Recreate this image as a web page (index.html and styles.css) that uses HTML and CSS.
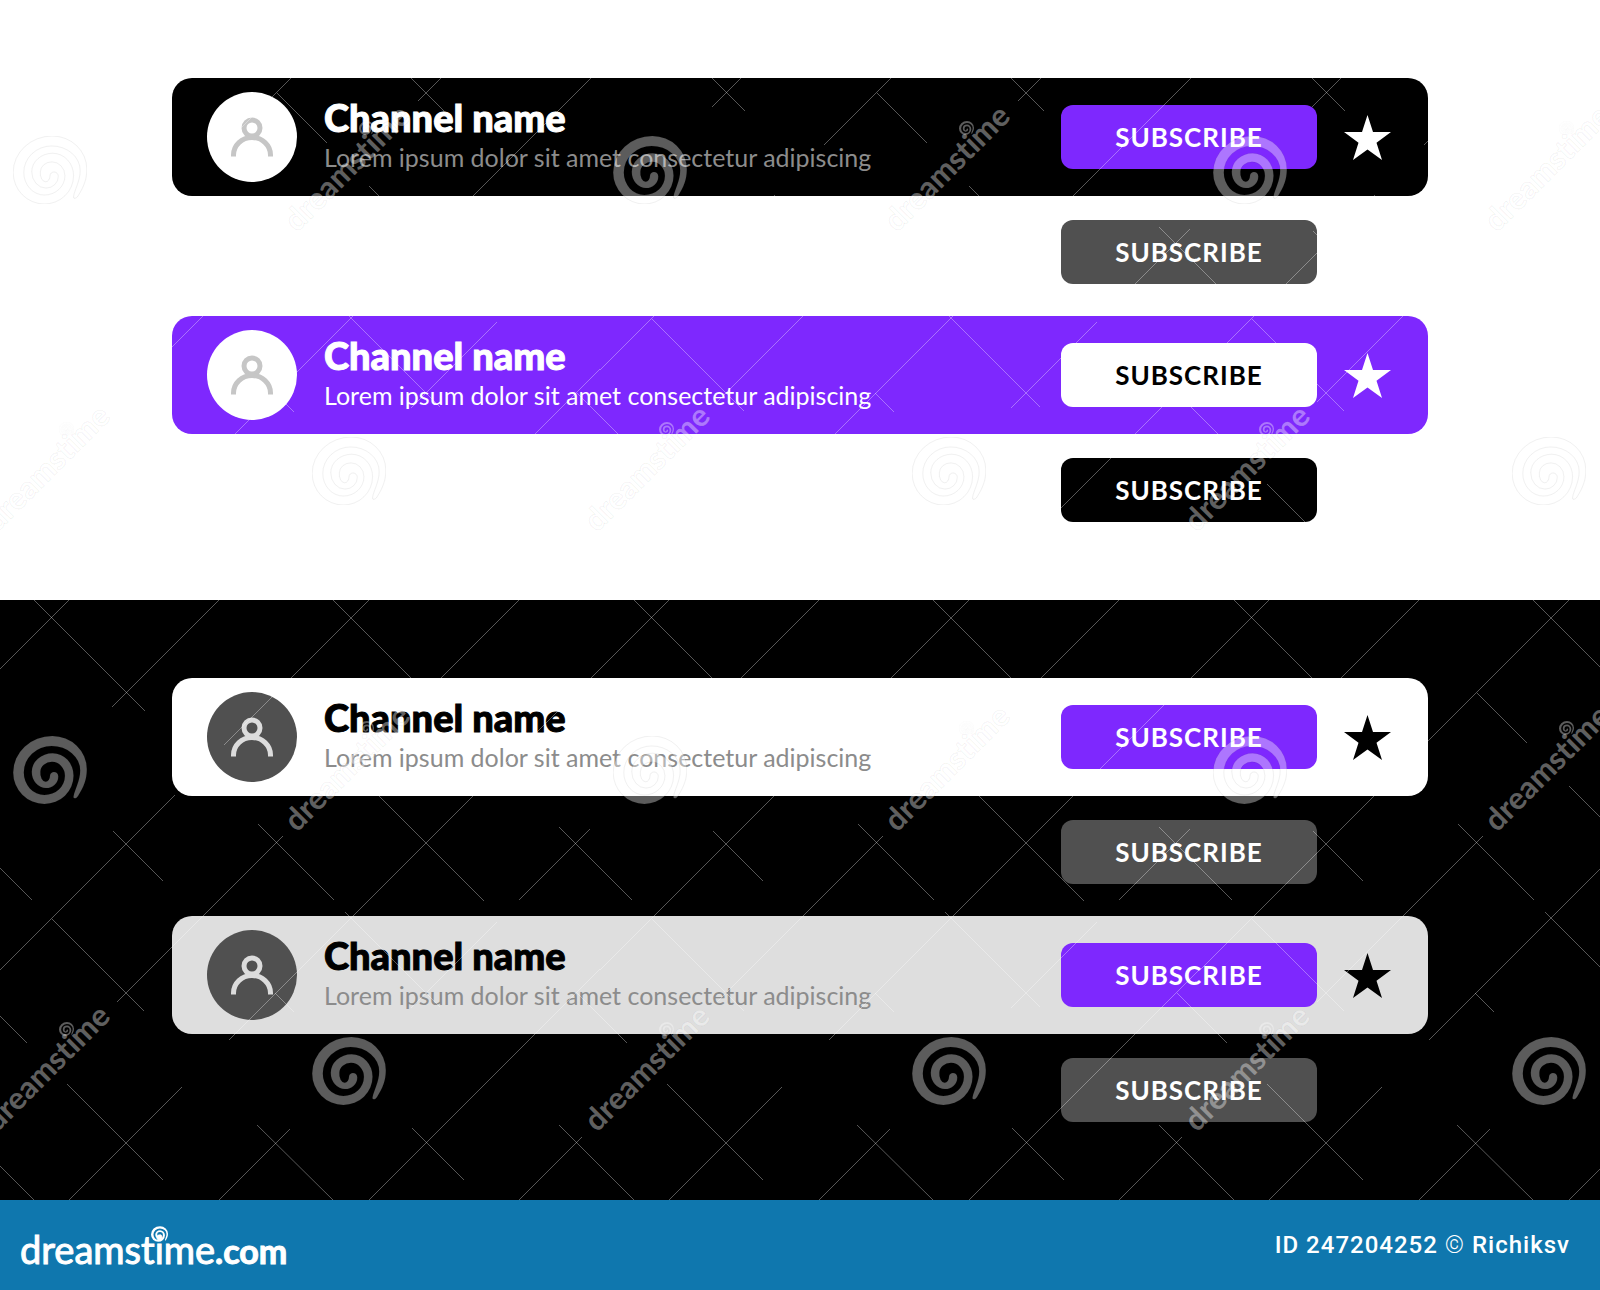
FILE: index.html
```html
<!DOCTYPE html>
<html lang="en">
<head>
    <meta charset="UTF-8">
    <meta name="viewport" content="width=device-width, initial-scale=1.0">
    <title>Channel name</title>

    <link rel="stylesheet" href="styles.css">
</head>
<body>
    <!-- shared shapes -->
    <svg class="shapes" width="0" height="0" aria-hidden="true">
        <symbol id="person" viewBox="0 0 42 40">
            <circle cx="21" cy="11" r="8" />
            <path d="M2.500 39.500V38a18.500 17.500 0 0 1 37 0v1.500" />
        </symbol>
        <symbol id="star" viewBox="0 0 47 45">
            <path d="M23.500 0L29 17H47L32.500 27.800L38 45L23.500 34.600L9 45L14.500 27.800L0 17H18z" />
        </symbol>
        <symbol id="spiral" viewBox="0 0 222 205">
            <path d="M182 182C180 192 192 188 196 180C212 154 222 132 222 100A104 100 0 0 0 118 0A118 110 0 0 0 0 110A94 95 0 0 0 94 205A88 85 0 0 0 182 120A63 67 0 0 0 119 52A63 56 0 0 0 56 108A43 49 0 0 0 99 157A37 35 0 0 0 136 122C136 105 112 104 111 120A13 18 0 0 1 98 138A16 26 0 0 1 82 108A35 30 0 0 1 117 78A39 42 0 0 1 156 120A62 58 0 0 1 94 178A62 68 0 0 1 32 110A84 80 0 0 1 116 30A86 74 0 0 1 202 104C202 135 186 160 182 182z" />
        </symbol>
    </svg>

    <main class="page">
        <section class="panel light">
            <div class="group">
                <article class="card black">
                    <div class="avatar"><svg width="42" height="40"><use href="#person" /></svg></div>
                    <div class="info">
                        <h2>Channel name</h2>
                        <p>Lorem ipsum dolor sit amet consectetur adipiscing</p>
                    </div>
                    <button class="subscribe purple-btn">SUBSCRIBE</button>
                    <button class="star" aria-label="Favourite"><svg width="47" height="45"><use href="#star" /></svg></button>
                </article>
                <button class="subscribe gray-btn below">SUBSCRIBE</button>
            </div>
            <div class="group">
                <article class="card purple">
                    <div class="avatar"><svg width="42" height="40"><use href="#person" /></svg></div>
                    <div class="info">
                        <h2>Channel name</h2>
                        <p>Lorem ipsum dolor sit amet consectetur adipiscing</p>
                    </div>
                    <button class="subscribe white-btn">SUBSCRIBE</button>
                    <button class="star" aria-label="Favourite"><svg width="47" height="45"><use href="#star" /></svg></button>
                </article>
                <button class="subscribe black-btn below">SUBSCRIBE</button>
            </div>
        </section>

        <section class="panel dark">
            <div class="group">
                <article class="card white">
                    <div class="avatar"><svg width="42" height="40"><use href="#person" /></svg></div>
                    <div class="info">
                        <h2>Channel name</h2>
                        <p>Lorem ipsum dolor sit amet consectetur adipiscing</p>
                    </div>
                    <button class="subscribe purple-btn">SUBSCRIBE</button>
                    <button class="star" aria-label="Favourite"><svg width="47" height="45"><use href="#star" /></svg></button>
                </article>
                <button class="subscribe gray-btn below">SUBSCRIBE</button>
            </div>
            <div class="group">
                <article class="card gray">
                    <div class="avatar"><svg width="42" height="40"><use href="#person" /></svg></div>
                    <div class="info">
                        <h2>Channel name</h2>
                        <p>Lorem ipsum dolor sit amet consectetur adipiscing</p>
                    </div>
                    <button class="subscribe purple-btn">SUBSCRIBE</button>
                    <button class="star" aria-label="Favourite"><svg width="47" height="45"><use href="#star" /></svg></button>
                </article>
                <button class="subscribe gray-btn below">SUBSCRIBE</button>
            </div>
        </section>

        <!-- watermark, lines and spirals are one 600px tile repeated over both panels -->
        <svg class="watermark" aria-hidden="true">
            <defs>
                <pattern id="tile" width="600" height="600" patternUnits="userSpaceOnUse">
                    <path class="lines" d="M69 0L0 69M219 0L112 107M369 0L224 145M175 195L0 370M519 0L418 101M283 236L117 402M600 69L229 440M182 487L69 600M590 229L519 300M497 322L411 408M290 529L219 600M600 369L369 600M582 537L519 600" />
                    <path class="lines" d="M34 0L145 111M333 0L444 111M277 93L327 143M369 186L484 301M113 231L163 281M559 227L600 268M0 268L32 300M258 224L334 300M345 312L440 407M577 393L600 416M0 416L27 443M52 319L144 411M275 393L294 412M67 484L163 580M257 525L333 600M412 528L464 580M559 525L600 566M0 566L34 600" />
                    <g class="spirals">
                        <use href="#spiral" x="13" y="136" width="74" height="68" />
                        <use href="#spiral" x="312" y="437" width="74" height="68" />
                        <use href="#spiral" x="359" y="121" width="15" height="14" />
                        <use href="#spiral" x="59" y="422" width="15" height="14" />
                    </g>
                </pattern>
            </defs>
            <rect width="100%" height="100%" fill="url(#tile)" />
            <g class="words">
                <text transform="translate(297 233) rotate(-45)">dreamstime</text>
                <text transform="translate(897 233) rotate(-45)">dreamstime</text>
                <text transform="translate(1497 233) rotate(-45)">dreamstime</text>
                <text transform="translate(-3 533) rotate(-45)">dreamstime</text>
                <text transform="translate(597 533) rotate(-45)">dreamstime</text>
                <text transform="translate(1197 533) rotate(-45)">dreamstime</text>
                <text transform="translate(297 833) rotate(-45)">dreamstime</text>
                <text transform="translate(897 833) rotate(-45)">dreamstime</text>
                <text transform="translate(1497 833) rotate(-45)">dreamstime</text>
                <text transform="translate(-3 1133) rotate(-45)">dreamstime</text>
                <text transform="translate(597 1133) rotate(-45)">dreamstime</text>
                <text transform="translate(1197 1133) rotate(-45)">dreamstime</text>
            </g>
        </svg>
    </main>

    <footer class="footer">
        <div class="logo">
            dreamst<span class="swirl">i<svg width="17" height="16"><use href="#spiral" /></svg></span>me<b>.com</b>
        </div>
        <p class="credit">ID 247204252 <span>©</span> Richiksv</p>
    </footer>
</body>
</html>
```
FILE: styles.css
```css
*{
    margin: 0;
    padding: 0;
    box-sizing: border-box;
}
body 
{
    font-family: Lato, "Open Sans", sans-serif;
    background-color: white;
}
.shapes 
{
    position: absolute;
}
.page 
{
    position: relative;
}
.panel 
{
    display: flex;
    flex-direction: column;
    gap: 32px;
    padding: 78px 20px;
}
.light 
{
    background-color: white;
}
.dark 
{
    background-color: black;
}
.group 
{
    display: flex;
    flex-direction: column;
    gap: 24px;
    width: 100%;
    max-width: 1256px;
    margin: 0 auto;
}
.card 
{
    display: flex;
    align-items: center;
    gap: 27px;
    padding: 14px 37px 14px 35px;
    border-radius: 20px;
}
.avatar 
{
    display: flex;
    align-items: center;
    justify-content: center;
    flex-shrink: 0;
    width: 90px;
    height: 90px;
    border-radius: 50%;
    background-color: white;
    color: #c6c6c6;
}
.avatar svg 
{
    fill: none;
    stroke: currentColor;
    stroke-width: 5px;
}
.info 
{
    flex: 1;
    padding-bottom: 4px;
}
.info h2 
{
    font-size: 38px;
    font-weight: 900;
    line-height: 44px;
    -webkit-text-stroke: 1px currentColor;
}
.info p 
{
    font-size: 25px;
    line-height: 36px;
    color: #8c8c8c;
}
.subscribe 
{
    width: 256px;
    height: 64px;
    border: 0;
    border-radius: 12px;
    font-family: inherit;
    font-size: 26px;
    font-weight: 700;
    letter-spacing: 1px;
    color: white;
    cursor: pointer;
}
.below 
{
    align-self: flex-end;
    margin-right: 111px;
}
.star 
{
    display: flex;
    border: 0;
    background: none;
    color: inherit;
    cursor: pointer;
}
.star svg 
{
    fill: currentColor;
}

/* card colours */
.black 
{
    background-color: black;
    color: white;
}
.purple 
{
    background-color: #7e28fe;
    color: white;
}
.purple .info p 
{
    color: white;
}
.white 
{
    background-color: white;
    color: black;
}
.gray 
{
    background-color: #dedede;
    color: black;
}
.dark .avatar 
{
    background-color: #505050;
    color: #dcdcdc;
}

/* button colours */
.purple-btn 
{
    background-color: #7e28fe;
}
.gray-btn 
{
    background-color: #505050;
}
.white-btn 
{
    background-color: white;
    color: black;
}
.black-btn 
{
    background-color: black;
}

.watermark 
{
    position: absolute;
    top: 0;
    left: 0;
    width: 100%;
    height: 100%;
    pointer-events: none;
}
.lines 
{
    fill: none;
    stroke: white;
    stroke-opacity: 0.34;
}
.spirals 
{
    fill: white;
    fill-opacity: 0.36;
    stroke: black;
    stroke-opacity: 0.06;
    stroke-width: 3px;
}
.words 
{
    font-size: 31px;
    font-weight: 700;
    font-variant-ligatures: none;
    fill: white;
    fill-opacity: 0.4;
    stroke: black;
    stroke-opacity: 0.06;
}

.footer 
{
    display: flex;
    align-items: center;
    justify-content: space-between;
    min-height: 90px;
    padding: 0 30px 0 20px;
    background-color: #0f77ae;
    color: white;
}
.logo 
{
    padding-top: 10px;
    font-size: 38px;
    font-weight: 400;
    font-variant-ligatures: none;
    line-height: 44px;
    -webkit-text-stroke: 1px white;
}
.logo b 
{
    font-size: 34px;
    font-weight: 700;
}
.swirl 
{
    position: relative;
}
.swirl svg 
{
    position: absolute;
    top: 0;
    left: -4px;
    fill: white;
}
.credit 
{
    font-family: Roboto, sans-serif;
    font-size: 24px;
    font-weight: 500;
    letter-spacing: 1px;
}
.credit span 
{
    font-weight: 300;
}
```
